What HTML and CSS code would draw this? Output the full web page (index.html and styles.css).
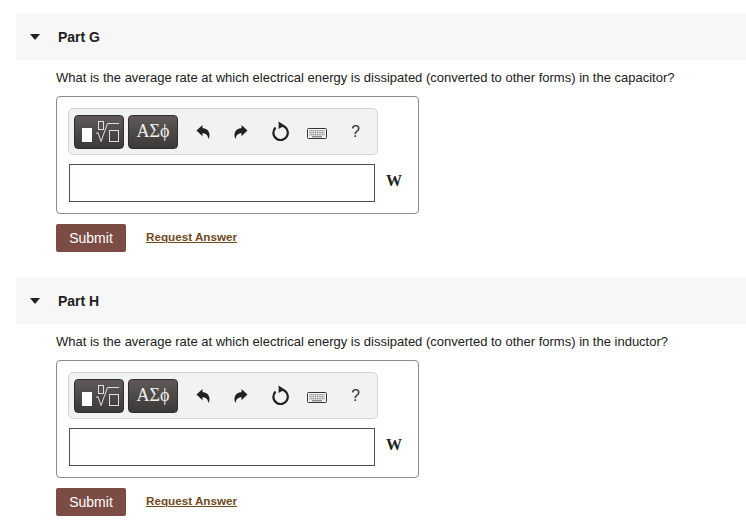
FILE: index.html
```html
<!DOCTYPE html>
<html lang="en">
<head>
<meta charset="UTF-8">
<meta name="viewport" content="width=device-width, initial-scale=1.0">
<title>Parts G and H</title>
<link rel="stylesheet" href="styles.css">
</head>
<body>

<svg class="icon-defs" width="0" height="0" aria-hidden="true">
  <symbol id="i-math" viewBox="0 0 48 32">
    <rect class="math-solid" x="7" y="12" width="10" height="14"/>
    <rect class="math-line" x="23.5" y="5.5" width="5" height="8"/>
    <path class="math-line" d="M21 17.5 L23 16.5 L26 25.5 L32.5 7.5 H44"/>
    <rect class="math-line" x="34.5" y="14.5" width="9" height="11"/>
  </symbol>
  <symbol id="i-undo" viewBox="0 0 14 16">
    <path d="M0.5 6.5 L6.5 1 V4.2 C10.5 4.2 13.5 6.8 13.5 11 C13.5 12.6 13 14.2 12.2 15 C12.2 11.5 10.2 9.2 6.5 9.2 V12.2 Z"/>
  </symbol>
  <symbol id="i-redo" viewBox="0 0 14 16">
    <path d="M13.5 6.5 L7.5 1 V4.2 C3.5 4.2 0.5 6.8 0.5 11 C0.5 12.6 1 14.2 1.8 15 C1.8 11.5 3.8 9.2 7.5 9.2 V12.2 Z"/>
  </symbol>
  <symbol id="i-reset" viewBox="0 0 18 20">
    <path class="ring" d="M4.6 6.6 A7.2 7.2 0 1 0 9.6 4.6"/>
    <path d="M7.6 0.6 L13.6 4.4 L7.6 8 Z"/>
  </symbol>
  <symbol id="i-keys" viewBox="0 0 20 11">
    <rect class="kb" x="0.5" y="0.5" width="19" height="10" rx="1"/>
    <path class="kb-keys" d="M2.5 2.8 H17.5 M2.5 4.8 H17.5 M2.5 6.8 H17.5"/>
    <path class="kb-bar" d="M5 8.8 H15"/>
  </symbol>
</svg>

<section class="part">
  <header class="part-head">
    <span class="caret"></span>
    <h2>Part G</h2>
  </header>
  <div class="part-body">
    <p class="question">What is the average rate at which electrical energy is dissipated (converted to other forms) in the capacitor?</p>
    <div class="answer-box">
      <div class="toolbar">
        <button class="tpl-btn tpl-math" type="button"><svg class="math-icon"><use href="#i-math"/></svg></button>
        <button class="tpl-btn tpl-greek" type="button">ΑΣϕ</button>
        <div class="tools">
          <svg class="tool tool-undo"><use href="#i-undo"/></svg>
          <svg class="tool tool-redo"><use href="#i-redo"/></svg>
          <svg class="tool tool-reset"><use href="#i-reset"/></svg>
          <svg class="tool tool-keys"><use href="#i-keys"/></svg>
          <span class="tool-help">?</span>
        </div>
      </div>
      <div class="input-row">
        <input class="answer" type="text" aria-label="Answer">
        <span class="unit">W</span>
      </div>
    </div>
    <div class="actions">
      <button class="submit" type="button">Submit</button>
      <a class="request" href="#">Request Answer</a>
    </div>
  </div>
</section>

<section class="part">
  <header class="part-head">
    <span class="caret"></span>
    <h2>Part H</h2>
  </header>
  <div class="part-body">
    <p class="question">What is the average rate at which electrical energy is dissipated (converted to other forms) in the inductor?</p>
    <div class="answer-box">
      <div class="toolbar">
        <button class="tpl-btn tpl-math" type="button"><svg class="math-icon"><use href="#i-math"/></svg></button>
        <button class="tpl-btn tpl-greek" type="button">ΑΣϕ</button>
        <div class="tools">
          <svg class="tool tool-undo"><use href="#i-undo"/></svg>
          <svg class="tool tool-redo"><use href="#i-redo"/></svg>
          <svg class="tool tool-reset"><use href="#i-reset"/></svg>
          <svg class="tool tool-keys"><use href="#i-keys"/></svg>
          <span class="tool-help">?</span>
        </div>
      </div>
      <div class="input-row">
        <input class="answer" type="text" aria-label="Answer">
        <span class="unit">W</span>
      </div>
    </div>
    <div class="actions">
      <button class="submit" type="button">Submit</button>
      <a class="request" href="#">Request Answer</a>
    </div>
  </div>
</section>

</body>
</html>
```

FILE: styles.css
```css
html, body {
  height: 100%;
  overflow: hidden;
}
body {
  margin: 0;
  padding: 14px 0 0 16px;
  box-sizing: border-box;
  background-color: #fff;
  color: #212121;
  font-family: "Liberation Sans", Arial, sans-serif;
  font-size: 12px;
}
.icon-defs {
  position: absolute;
}
.part {
  margin-bottom: 26px;
}
.part-head {
  display: flex;
  align-items: center;
  height: 46px;
  background-color: #f7f7f7;
}
.caret {
  width: 0;
  height: 0;
  margin-left: 14px;
  border-left: 5px solid transparent;
  border-right: 5px solid transparent;
  border-top: 6px solid #212121;
}
.part-head h2 {
  margin: 0 0 0 18px;
  font-size: 14px;
  font-weight: bold;
}
.part-body {
  padding-left: 40px;
}
.question {
  margin: 10px 0;
  font-size: 13px;
  line-height: 16px;
}
.answer-box {
  box-sizing: border-box;
  width: 363px;
  height: 118px;
  padding: 11px 12px;
  border: 1px solid #8c8c8c;
  border-radius: 4px;
}
.toolbar {
  display: flex;
  align-items: center;
  box-sizing: border-box;
  width: 310px;
  height: 47px;
  margin-left: -1px;
  padding: 0 5px;
  background-color: #f2f2f2;
  border: 1px solid #d4d4d4;
  border-radius: 5px;
}
.tpl-btn {
  display: flex;
  align-items: center;
  justify-content: center;
  box-sizing: border-box;
  height: 34px;
  padding: 0;
  border: 1px solid #2e2e2e;
  border-radius: 4px;
  background: linear-gradient(#5f5a59, #3c3837);
  color: #fff;
}
.tpl-math {
  width: 50px;
  margin-right: 4px;
}
.tpl-greek {
  width: 50px;
  font-family: "Liberation Serif", "Times New Roman", serif;
  font-size: 18px;
  color: #eee;
}
.math-icon {
  width: 48px;
  height: 32px;
}
.math-solid {
  fill: #fff;
}
.math-line {
  fill: none;
  stroke: #ddd;
}
.tools {
  display: flex;
  align-items: center;
  margin-left: 18px;
}
.tool {
  fill: #212121;
}
.tool-undo, .tool-redo {
  width: 14px;
  height: 16px;
}
.tool-undo {
  margin-right: 24px;
}
.tool-redo {
  margin-right: 23px;
}
.tool-reset {
  width: 18px;
  height: 20px;
  margin: 0 18px 1px 0;
}
.tool-keys {
  width: 20px;
  height: 11px;
  margin: 4px 24px 0 0;
}
.ring {
  fill: none;
  stroke: #212121;
  stroke-width: 2.2;
}
.kb {
  fill: #f2f2f2;
  stroke: #333;
}
.kb-keys {
  fill: none;
  stroke: #666;
  stroke-dasharray: 1.2 0.6;
}
.kb-bar {
  fill: none;
  stroke: #666;
}
.tool-help {
  font-size: 16px;
  color: #333;
}
.input-row {
  display: flex;
  align-items: center;
  margin-top: 9px;
}
.answer {
  box-sizing: border-box;
  width: 306px;
  height: 38px;
  padding: 0 6px;
  border: 1px solid #5c4a44;
  border-radius: 0;
  background-color: #fff;
}
.unit {
  margin: 0 0 4px 11px;
  font-family: "Liberation Serif", "Times New Roman", serif;
  font-size: 16px;
  font-weight: bold;
}
.actions {
  display: flex;
  align-items: center;
  margin-top: 10px;
}
.submit {
  width: 70px;
  height: 28px;
  padding: 0;
  border: none;
  border-radius: 2px;
  background-color: #7b4c43;
  color: #fff;
  font-family: inherit;
  font-size: 14px;
}
.request {
  margin: 0 0 4px 20px;
  color: #6f4a1e;
  font-size: 11.7px;
  font-weight: bold;
}
```
